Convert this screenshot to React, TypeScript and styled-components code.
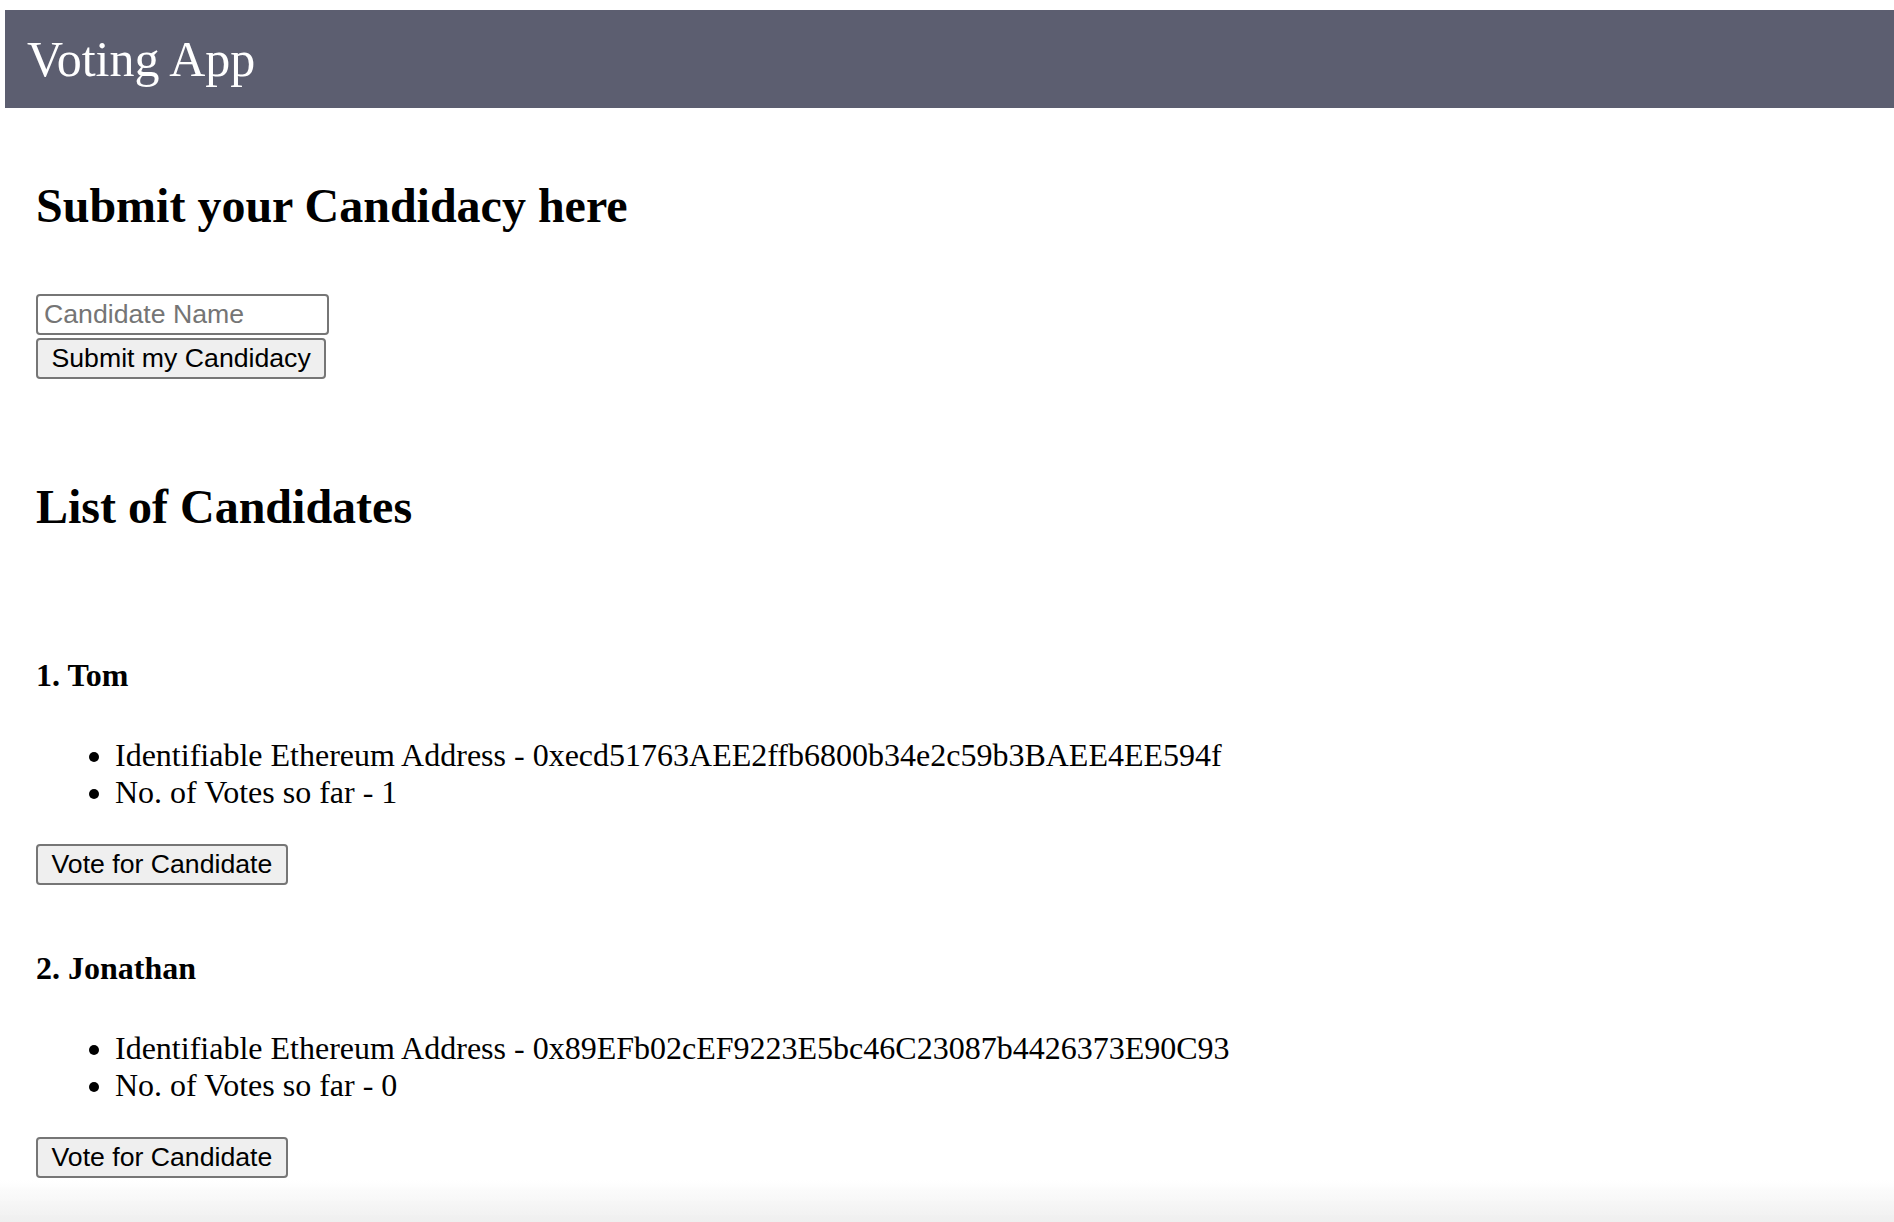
import React from "react";
import styled, { createGlobalStyle } from "styled-components";

const GlobalStyle = createGlobalStyle`
  html, body {
    margin: 0;
    padding: 0;
    background: #ffffff;
    color: #000000;
    font-family: "Liberation Serif", "Times New Roman", serif;
  }
`;

const Page = styled.div`
  display: flex;
  flex-direction: column;
  padding-top: 10px;
  min-height: 1212px;
`;

const Header = styled.header`
  display: flex;
  align-items: center;
  height: 98px;
  margin-left: 5px;
  padding-left: 22px;
  background-color: #5c5e70;
`;

const Brand = styled.div`
  font-size: 50px;
  line-height: 56px;
  color: #ffffff;
`;

const Main = styled.main`
  display: flex;
  flex-direction: column;
  align-items: flex-start;
  padding-left: 36px;
`;

const SectionTitle = styled.h2<{ $top: number }>`
  margin: ${(p) => p.$top}px 0 0;
  font-size: 48px;
  line-height: 56px;
  font-weight: bold;
`;

const Form = styled.div`
  display: flex;
  flex-direction: column;
  align-items: flex-start;
  gap: 3px;
  margin-top: 60px;
`;

const NameInput = styled.input`
  box-sizing: border-box;
  width: 293px;
  height: 41px;
  margin: 0;
  padding: 0 6px;
  border: 2px solid #767676;
  border-radius: 4px;
  font-family: "Liberation Sans", Arial, sans-serif;
  font-size: 26.67px;
  color: #000000;
  outline: none;

  &::placeholder {
    color: #757575;
  }
`;

const Button = styled.button`
  box-sizing: border-box;
  height: 41px;
  margin: 0;
  padding: 0 13.5px;
  border: 2px solid #767676;
  border-radius: 4px;
  background-color: #efefef;
  font-family: "Liberation Sans", Arial, sans-serif;
  font-size: 26.67px;
  color: #000000;
  cursor: pointer;
`;

const Candidate = styled.section<{ $top: number }>`
  display: flex;
  flex-direction: column;
  align-items: flex-start;
  margin-top: ${(p) => p.$top}px;
`;

const CandidateName = styled.h4`
  margin: 0;
  font-size: 32px;
  line-height: 37px;
  font-weight: bold;
`;

const Details = styled.ul`
  margin: 43px 0 33px;
  padding-left: 79px;
  font-size: 32px;
  line-height: 37px;
  list-style: disc;
`;

const BottomFade = styled.div`
  position: fixed;
  left: 0;
  right: 0;
  bottom: 0;
  height: 42px;
  pointer-events: none;
  background: linear-gradient(to bottom, rgba(240, 240, 240, 0), #efefef);
`;

const candidates = [
  { name: "Tom", address: "0xecd51763AEE2ffb6800b34e2c59b3BAEE4EE594f", votes: 1 },
  { name: "Jonathan", address: "0x89EFb02cEF9223E5bc46C23087b4426373E90C93", votes: 0 },
];

const App = () => {
  return (
    <Page>
      <GlobalStyle />
      <Header>
        <Brand>Voting App</Brand>
      </Header>
      <Main>
        <SectionTitle $top={70}>Submit your Candidacy here</SectionTitle>
        <Form>
          <NameInput placeholder="Candidate Name" />
          <Button>Submit my Candidacy</Button>
        </Form>
        <SectionTitle $top={100}>List of Candidates</SectionTitle>
        {candidates.map((c, i) => (
          <Candidate key={c.address} $top={i === 0 ? 122 : 65}>
            <CandidateName>
              {i + 1}. {c.name}
            </CandidateName>
            <Details>
              <li>Identifiable Ethereum Address - {c.address}</li>
              <li>No. of Votes so far - {c.votes}</li>
            </Details>
            <Button>Vote for Candidate</Button>
          </Candidate>
        ))}
      </Main>
      <BottomFade />
    </Page>
  );
};

export default App;
